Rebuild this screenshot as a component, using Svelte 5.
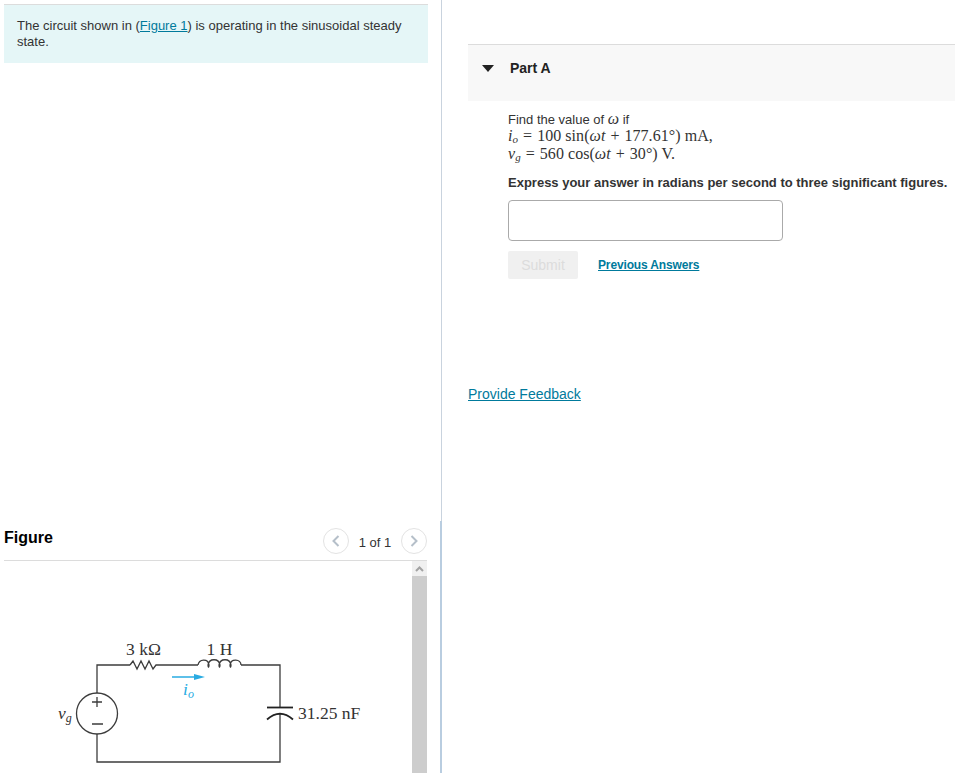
<script>
  const prompt = "Express your answer in radians per second to three significant figures.";
</script>

<div class="page">
  <section class="left">
    <div class="intro">The circuit shown in (<a href="#f">Figure 1</a>) is operating in the sinusoidal steady state.</div>
    <div class="figure">
      <header class="fig-head">
        <h2>Figure</h2>
        <nav class="pager">
          <span class="circle"><svg width="10" height="14" viewBox="0 0 10 14"><path d="M7.500 2 L2.500 7 L7.500 12" /></svg></span>
          <span class="count">1 of 1</span>
          <span class="circle"><svg width="10" height="14" viewBox="0 0 10 14"><path d="M2.500 2 L7.500 7 L2.500 12" /></svg></span>
        </nav>
      </header>
      <div class="fig-body">
        <svg class="circuit" width="408" height="212" viewBox="4 561 408 212">
          <g class="wire">
            <path d="M130 665 H97 V693 M97 734 V762 H280 V714 M280 707 V665 H241" />
            <path d="M158 665 H198" />
            <path d="M130 665 l3 -4 l4 8 l4 -8 l4 8 l4 -8 l4 8 l3 -4 h2" />
            <path d="M198 665 c1 -6 10 -7 11 0 c0 3 -1 3 -1 0 c1 -7 11 -7 12 0 c0 3 -1 3 -1 0 c1 -7 11 -7 12 0 c0 3 -1 3 -1 0 c1 -7 11 -6 11 0" />
            <circle cx="97" cy="713.500" r="20.500" />
            <path d="M97 697 V707 M92 702 H102 M92 724 H103" />
            <path class="plate" d="M267 707.500 H293" />
            <path class="plate" d="M267 719.500 Q280 708 293 719.500" />
          </g>
          <path class="arrow" d="M172 677 H196" />
          <path class="arrowhead" d="M194 674 L205 677 L194 680 Z" />
          <text x="126" y="655">3 kΩ</text>
          <text x="206.500" y="655">1 H</text>
          <text x="298" y="719">31.25 nF</text>
          <text class="it" x="58" y="719">v<tspan class="sub" dy="3">g</tspan></text>
          <text class="it blue" x="183" y="695">i<tspan class="sub" dy="3">o</tspan></text>
        </svg>
        <div class="scrollbar">
          <div class="sb-btn"><svg width="9" height="6" viewBox="0 0 9 6"><path d="M1 5 L4.500 1.500 L8 5" /></svg></div>
          <div class="sb-thumb"></div>
        </div>
      </div>
    </div>
  </section>

  <section class="right">
    <div class="part-head">
      <svg class="caret" width="12" height="7" viewBox="0 0 12 7"><path d="M0 0 H12 L6 7 Z" /></svg>
      <h3>Part A</h3>
    </div>
    <div class="part-body">
      <div class="find">Find the value of <span class="mi">ω</span> if</div>
      <div class="math"><span class="mi">i<sub>o</sub></span><span class="op">=</span>100 sin(<span class="mi">ωt</span><span class="op">+</span>177.61°) mA<span class="dot">,</span></div>
      <div class="math"><span class="mi">v<sub>g</sub></span><span class="op">=</span>560 cos(<span class="mi">ωt</span><span class="op">+</span>30°) V<span class="dot">.</span></div>
      <p class="prompt">{prompt}</p>
      <input class="answer" type="text" aria-label="answer" />
      <div class="actions">
        <button disabled>Submit</button>
        <a class="prev" href="#p">Previous Answers</a>
      </div>
    </div>
    <a class="feedback" href="#fb">Provide Feedback</a>
  </section>
</div>

<style>
  :global(body) { margin: 0; background: #fff; }
  .page {
    display: flex;
    height: 773px;
    overflow: hidden;
    font-family: "Liberation Sans", Arial, sans-serif;
    font-size: 13px;
    color: #333;
  }
  a { color: #007a9c; text-decoration: underline; }
  .left {
    width: 442px;
    flex: none;
    box-sizing: border-box;
    padding: 4px 15px 0 4px;
    display: flex;
    flex-direction: column;
    background: linear-gradient(#c9d3de, #c9d3de) no-repeat right 0 top 0 / 1px 521px,
                linear-gradient(#b9cde0, #b9cde0) no-repeat right 0 top 521px / 2px 252px;
  }
  .intro {
    background: #e5f6f7;
    border-top: 1px solid #dcdcdc;
    width: 424px;
    height: 59px;
    box-sizing: border-box;
    padding: 13px 13px 0;
    line-height: 16px;
    flex: none;
  }
  .figure { margin-top: 457px; flex: 1; display: flex; flex-direction: column; min-height: 0; }
  .fig-head {
    height: 40px;
    flex: none;
    display: flex;
    justify-content: space-between;
    border-bottom: 1px solid #dcdcdc;
  }
  h2 { margin: 0; font-size: 16px; line-height: 18px; padding-top: 9px; color: #000; font-weight: bold; }
  .pager { display: flex; align-items: flex-start; padding-top: 8px; }
  .circle {
    width: 24px;
    height: 24px;
    border: 1px solid #e3e3e3;
    border-radius: 50%;
    display: flex;
    align-items: center;
    justify-content: center;
  }
  .circle path { fill: none; stroke: #b5bfc9; stroke-width: 2; }
  .count { width: 52px; text-align: center; line-height: 30px; font-size: 13px; }
  .fig-body { flex: 1; display: flex; min-height: 0; }
  .circuit { flex: none; display: block; }
  .wire path, .wire circle { fill: none; stroke: #3c3c3c; stroke-width: 1.300; }
  .wire .plate { stroke-width: 1.800; stroke: #222; }
  .arrow { stroke: #29abe2; stroke-width: 1.500; fill: none; }
  .arrowhead { fill: #29abe2; }
  text { font-family: "Liberation Serif", serif; font-size: 17.500px; fill: #333; }
  .it { font-style: italic; }
  .sub { font-size: 12px; }
  .blue { fill: #29abe2; }
  .scrollbar { width: 15px; flex: none; display: flex; flex-direction: column; }
  .sb-btn { height: 15px; background: #f0f0f0; display: flex; align-items: center; justify-content: center; }
  .sb-btn path { fill: none; stroke: #a3a3a3; stroke-width: 2; }
  .sb-thumb { flex: 1; background: #cdcdcd; }

  .right { flex: 1; padding: 44px 0 0 26px; min-width: 0; }
  .part-head {
    height: 57px;
    box-sizing: border-box;
    background: #f8f8f8;
    border-top: 1px solid #dcdcdc;
    display: flex;
    align-items: flex-start;
    padding: 15px 0 0 14px;
  }
  .caret { margin-top: 5px; flex: none; }
  .caret path { fill: #222; }
  h3 { margin: 0 0 0 16px; font-size: 14px; line-height: 16px; color: #222; font-weight: bold; }
  .part-body { padding: 10px 0 0 40px; }
  .find { line-height: 15px; }
  .mi { font-family: "Liberation Serif", serif; font-style: italic; font-size: 16px; }
  .mi sub { font-size: 11px; line-height: 0; vertical-align: -2px; }
  .op { margin: 0 5px; }
  .math {
    font-family: "Liberation Serif", serif;
    font-size: 16px;
    line-height: 18px;
    letter-spacing: 0.05px;
    color: #333;
  }
  .prompt { margin: 12px 0 0; font-weight: bold; line-height: 16px; white-space: nowrap; }
  .answer {
    display: block;
    width: 275px;
    height: 41px;
    box-sizing: border-box;
    margin-top: 9px;
    border: 1px solid #aaa;
    border-radius: 4px;
    background: #fff;
    padding: 0;
  }
  .actions { display: flex; align-items: center; margin-top: 10px; }
  button {
    width: 70px;
    height: 28px;
    padding: 0;
    border: 0;
    border-radius: 2px;
    background: #f0f0f0;
    color: #dcdcdc;
    font: 14px "Liberation Sans", Arial, sans-serif;
  }
  .prev { margin-left: 20px; font-weight: bold; font-size: 12px; letter-spacing: -0.14px; }
  .feedback { display: inline-block; margin-top: 107px; font-size: 14px; line-height: 16px; }
</style>
